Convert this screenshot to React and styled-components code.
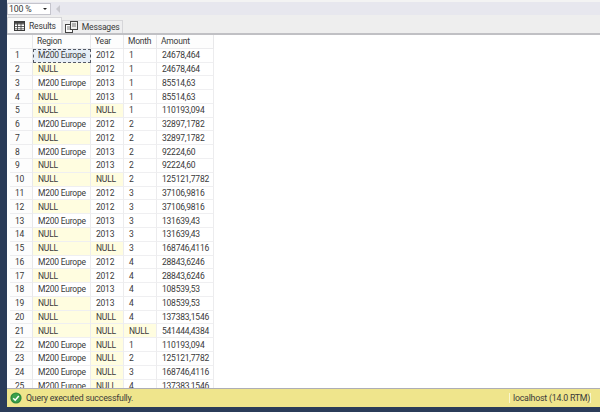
import React from "react";
import styled, { createGlobalStyle } from "styled-components";

const Global = createGlobalStyle`
  html, body { margin: 0; padding: 0; background: #fff; }
  #root { width: 600px; height: 412px; overflow: hidden; }
`;

const Window = styled.div`
  width: 600px; height: 412px; display: flex; flex-direction: column;
  background: #2b3c59; font-family: Roboto, "Liberation Sans", sans-serif;
  font-size: 8.5px; letter-spacing: -0.22px; color: #3a3a3a; overflow: hidden;
`;
const Body = styled.div`
  flex: 1; min-height: 0; margin-left: 7px; display: flex; flex-direction: column; background: #fff;
`;
const Toolbar = styled.div`
  height: 10px; flex: none; padding-top: 3px; background: #e7e7ee;
  display: flex; align-items: flex-start; gap: 5px; border-top: 2px solid #f3f3f3;
`;
const ZoomBox = styled.div`
  width: 38px; height: 10px; background: #fff; border: 1px solid #c4c4cc; margin-top: -2px; flex: none;
  display: flex; align-items: center; justify-content: space-between; padding: 0 3px 0 1px;
  font-size: 8.8px; position: relative; z-index: 1;
`;
const Caret = styled.span`
  width: 0; height: 0; border-left: 2px solid transparent; border-right: 2px solid transparent;
  border-top: 2px solid #222;
`;
const Grip = styled.span`
  width: 0; height: 0; margin-top: 0; border-top: 4px solid transparent; border-bottom: 4px solid transparent;
  border-right: 4px solid #c9c9cf;
`;
const TabStrip = styled.div`
  height: 18px; flex: none; display: flex; align-items: flex-end; background: #eeeeee;
  border-bottom: 2px solid #c0c0c4;
`;
const Tab = styled.div`
  height: ${p => (p.$active ? 16 : 13)}px; display: flex; align-items: center; gap: 4px;
  padding: 0 ${p => p.$active ? 5 : 2}px 0 ${p => p.$active ? 6 : 2}px; box-sizing: border-box; font-size: 8.6px;
  background: ${p => (p.$active ? "#fbfbfb" : "#eeeeef")};
  border: 1px solid #d6d6d9; border-bottom: none;
`;
const Grid = styled.div`
  flex: 1; min-height: 0; overflow: hidden; padding-left: 3px; background: #fff;
`;
const Table = styled.div`
  display: grid; width: 204px;
  grid-template-columns: 23px 58px 33px 33px 57px;
  grid-auto-rows: 13.79px;
`;
const HeadCell = styled.div`
  display: flex; align-items: center; padding-left: 4px; box-sizing: border-box;
  background: #fdfdfd; border-right: 1px solid #e8e8ea; border-bottom: 1px solid #ebebed;
`;
const RowNum = styled.div`
  display: flex; align-items: center; padding-left: 5px; box-sizing: border-box;
  background: #fdfdfd; border-right: 1px solid #e8e8ea; border-bottom: 1px solid #ededef;
`;
const Cell = styled.div`
  display: flex; align-items: center; padding-left: 5px; box-sizing: border-box; white-space: nowrap;
  background: ${p => (p.$null ? "#fffde0" : "#fff")};
  border-right: 1px solid #ececee; border-bottom: 1px solid #efeff1;
  ${p => p.$selected && "background:#e6eef6; outline:1px dashed #555a66; outline-offset:-1px;"}
`;
const Status = styled.div`
  height: 18px; flex: none; display: flex; align-items: center; background: #efe58c; border-top: 1px solid #aeaeb4;
  padding-left: 3px; font-size: 8.8px; color: #3a3a3a;
`;
const StatusMsg = styled.span`
  flex: 1; margin-left: 4px;
`;
const StatusServer = styled.span`
  width: 77px; height: 10px; display: flex; align-items: center; padding-left: 3px; margin-right: 9px;
  border-left: 1px solid #fbf7cf; border-right: 1px solid #fbf7cf; white-space: nowrap;
`;
const Footer = styled.div`
  height: 5px; flex: none; background: #2b3c59;
`;

const rows = [
  ["M200 Europe","2012","1","24678,464"],
  ["NULL","2012","1","24678,464"],
  ["M200 Europe","2013","1","85514,63"],
  ["NULL","2013","1","85514,63"],
  ["NULL","NULL","1","110193,094"],
  ["M200 Europe","2012","2","32897,1782"],
  ["NULL","2012","2","32897,1782"],
  ["M200 Europe","2013","2","92224,60"],
  ["NULL","2013","2","92224,60"],
  ["NULL","NULL","2","125121,7782"],
  ["M200 Europe","2012","3","37106,9816"],
  ["NULL","2012","3","37106,9816"],
  ["M200 Europe","2013","3","131639,43"],
  ["NULL","2013","3","131639,43"],
  ["NULL","NULL","3","168746,4116"],
  ["M200 Europe","2012","4","28843,6246"],
  ["NULL","2012","4","28843,6246"],
  ["M200 Europe","2013","4","108539,53"],
  ["NULL","2013","4","108539,53"],
  ["NULL","NULL","4","137383,1546"],
  ["NULL","NULL","NULL","541444,4384"],
  ["M200 Europe","NULL","1","110193,094"],
  ["M200 Europe","NULL","2","125121,7782"],
  ["M200 Europe","NULL","3","168746,4116"],
  ["M200 Europe","NULL","4","137383,1546"],
];

const GridIcon = () => (
  <svg width="11" height="10" viewBox="0 0 11 10">
    <rect x="0.5" y="0.5" width="10" height="9" fill="#fff" stroke="#3a3a3a" />
    <path d="M0 3h11M0 5.5h11M0 7.8h11M3.5 0v10M7 0v10" stroke="#3a3a3a" strokeWidth="0.8" />
    <rect x="0.5" y="0.5" width="10" height="2.2" fill="#444" />
  </svg>
);
const MsgIcon = () => (
  <svg width="13" height="12" viewBox="0 0 13 12">
    <rect x="0.5" y="3.5" width="7" height="8" fill="#fff" stroke="#444" />
    <rect x="5.5" y="0.5" width="7" height="8" fill="#eee" stroke="#444" />
    <path d="M2 6h4M2 8h4M7 3h4M7 5h4" stroke="#555" strokeWidth="0.8" />
  </svg>
);
const CheckIcon = () => (
  <svg width="12" height="12" viewBox="0 0 12 12">
    <circle cx="6" cy="6" r="5.6" fill="#2c8a3c" />
    <circle cx="6" cy="6" r="4.4" fill="#3ba04c" />
    <path d="M3.2 6.2 5.2 8.2 8.8 4" fill="none" stroke="#fff" strokeWidth="1.5" />
  </svg>
);

export default function App() {
  return (
    <Window>
      <Global />
      <Body>
        <Toolbar>
          <ZoomBox>100 %<Caret /></ZoomBox>
          <Grip />
        </Toolbar>
        <TabStrip>
          <Tab $active><GridIcon />Results</Tab>
          <Tab><MsgIcon />Messages</Tab>
        </TabStrip>
        <Grid>
          <Table>
            <HeadCell />
            <HeadCell>Region</HeadCell>
            <HeadCell>Year</HeadCell>
            <HeadCell>Month</HeadCell>
            <HeadCell>Amount</HeadCell>
            {rows.map((r, i) => (
              <React.Fragment key={i}>
                <RowNum>{i + 1}</RowNum>
                {r.map((v, j) => (
                  <Cell key={j} $null={v === "NULL" && j < 3} $selected={i === 0 && j === 0}>{v}</Cell>
                ))}
              </React.Fragment>
            ))}
          </Table>
        </Grid>
        <Status>
          <CheckIcon />
          <StatusMsg>Query executed successfully.</StatusMsg>
          <StatusServer>localhost (14.0 RTM)</StatusServer>
        </Status>
      </Body>
      <Footer />
    </Window>
  );
}
